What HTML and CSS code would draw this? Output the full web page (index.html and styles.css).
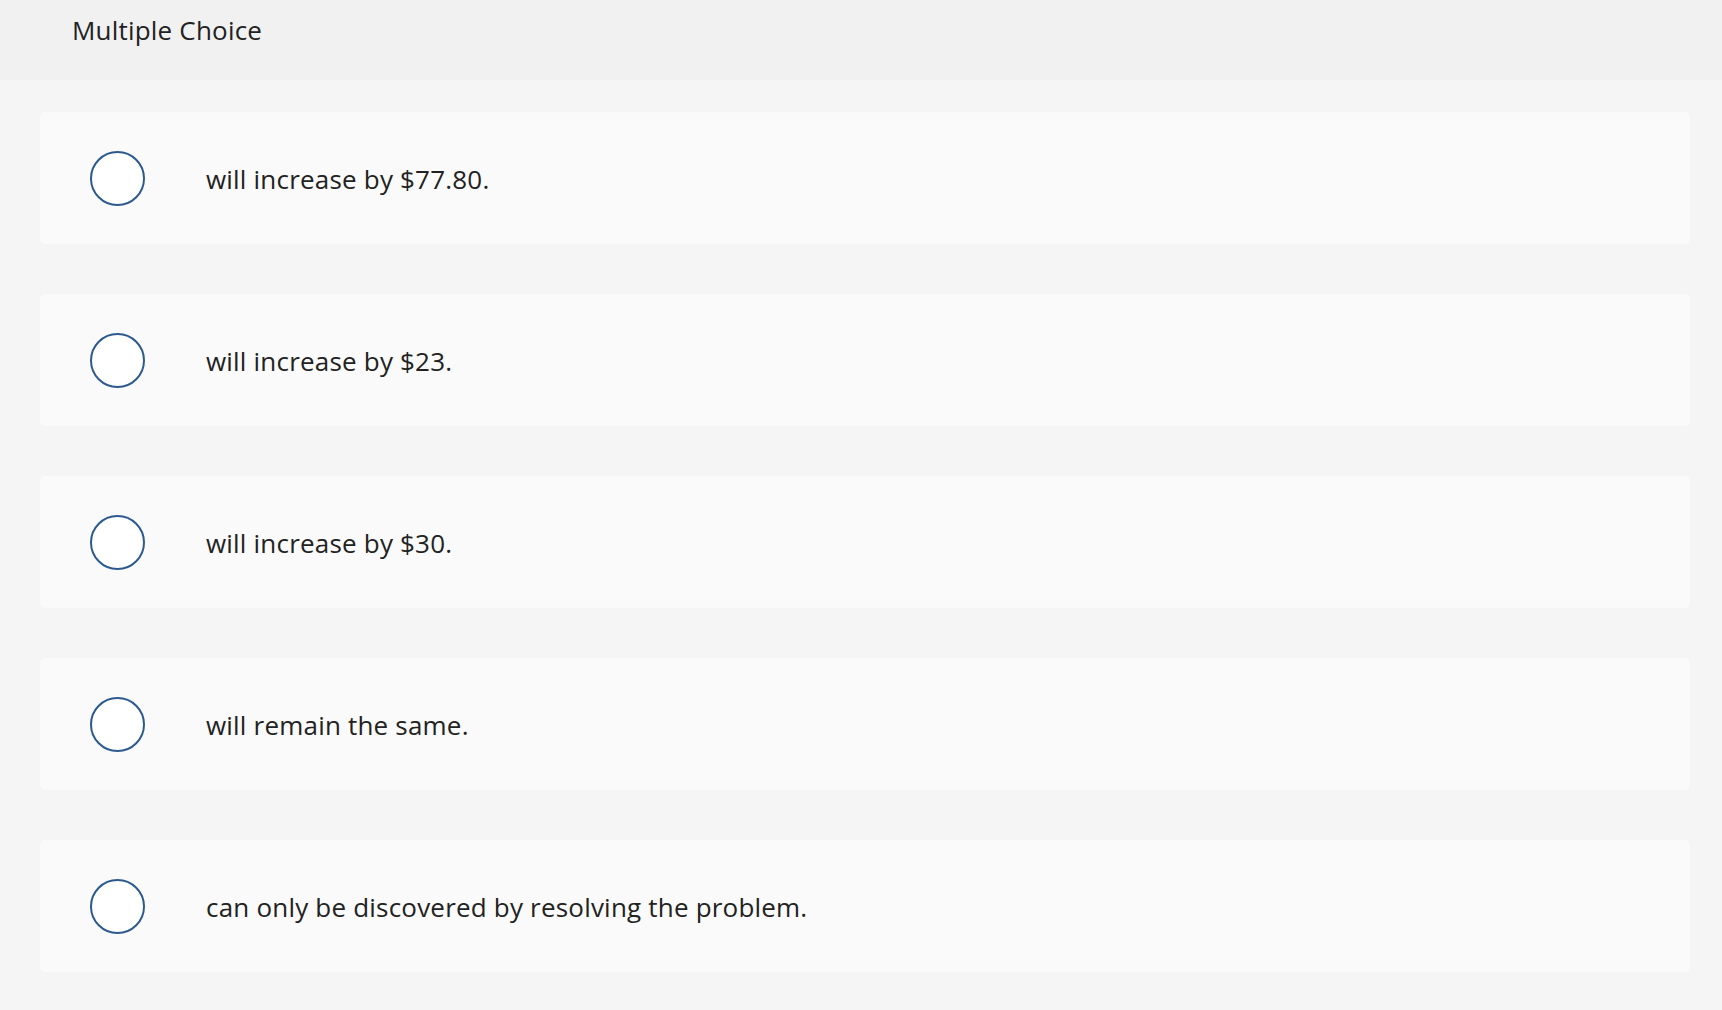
FILE: index.html
```html
<!DOCTYPE html>
<html>
<head>
<meta charset="utf-8">
<link rel="stylesheet" href="styles.css">
</head>
<body>
<header class="header"><span class="title">Multiple Choice</span></header>
<main class="choices">
  <label class="choice"><span class="radio"></span><span class="text">will increase by $77.80.</span></label>
  <label class="choice"><span class="radio"></span><span class="text">will increase by $23.</span></label>
  <label class="choice"><span class="radio"></span><span class="text">will increase by $30.</span></label>
  <label class="choice"><span class="radio"></span><span class="text">will remain the same.</span></label>
  <label class="choice"><span class="radio"></span><span class="text">can only be discovered by resolving the problem.</span></label>
</main>
</body>
</html>
```
FILE: styles.css
```css
html, body {
  margin: 0;
  padding: 0;
  background: #f5f5f5;
  font-family: "Open Sans", "Lato", sans-serif;
  color: #222222;
}
.header {
  height: 80px;
  background: #f1f1f1;
  display: flex;
  align-items: center;
  padding-left: 72px;
  box-sizing: border-box;
  padding-bottom: 20px;
}
.title {
  font-size: 26px;
  letter-spacing: 0.2px;
}
.choices {
  display: flex;
  flex-direction: column;
  gap: 50px;
  padding: 32px 32px 0 40px;
}
.choice {
  height: 132px;
  background: #fafafa;
  border-radius: 5px;
  display: flex;
  align-items: center;
  padding-left: 50px;
  box-sizing: border-box;
}
.radio {
  width: 55px;
  height: 55px;
  box-sizing: border-box;
  border: 2px solid #2c5a8f;
  border-radius: 50%;
  background: #ffffff;
  flex: none;
}
.text {
  margin-left: 61px;
  padding-top: 1px;
  font-size: 26px;
  letter-spacing: 0.2px;
}
```
